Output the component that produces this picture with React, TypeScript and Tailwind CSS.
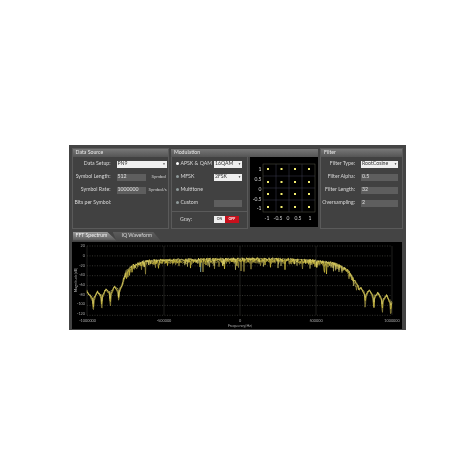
const font = { fontFamily: 'Lato, "Open Sans", "Liberation Sans", sans-serif' };

function rng(seed: number) {
  return () => {
    seed = (seed + 0x6d2b79f5) | 0;
    let t = Math.imul(seed ^ (seed >>> 15), 1 | seed);
    t = (t + Math.imul(t ^ (t >>> 7), 61 | t)) ^ t;
    return ((t ^ (t >>> 14)) >>> 0) / 4294967296;
  };
}

// top edge of the spectrum, in chart pixels (x, y)
const envelope = [
  [15, 52], [50, 41], [52, 34], [54, 28], [61, 22], [73, 18], [90, 17], [130, 16],
  [200, 15.5], [240, 17], [263, 20], [276, 27], [283, 38], [287, 44], [320, 54],
];

function envAt(x: number) {
  for (let i = 0; i < envelope.length - 1; i++) {
    const [x0, y0] = envelope[i];
    const [x1, y1] = envelope[i + 1];
    if (x >= x0 && x <= x1) return y0 + ((y1 - y0) * (x - x0)) / (x1 - x0);
  }
  return 54;
}

function spectrum(seed: number, spread: number, depth: number) {
  const r = rng(seed);
  let d = "";
  for (let x = 15; x <= 320; x += 0.5) {
    const e = envAt(x);
    const side = x < 51 || x > 287;
    let y = e + r() * spread;
    if (side) {
      const phase = ((x - 17) % 8.5) / 8.5;
      y = e + (1 - Math.abs(phase - 0.5) * 2) * depth + r() * 2;
      if (phase > 0.44 && phase < 0.56) y += depth * 0.6 + r() * 4;
    } else if (r() > 0.94) {
      y += 2 + r() * 8;
    }
    d += `${d ? "L" : "M"}${x} ${y.toFixed(1)}`;
  }
  return d;
}

function Chart() {
  const ticks = ["20", "0", "-20", "-40", "-60", "-80", "-100", "-120"];
  const xTicks = [
    ["-1000000", 15],
    ["-500000", 92],
    ["0", 168],
    ["500000", 244],
    ["1000000", 320],
  ] as const;
  return (
    <svg viewBox="0 0 330 87" className="block h-[87px] w-[330px] bg-black">
      {ticks.map((t, i) => (
        <g key={t}>
          <line x1="15" x2="320" y1={4 + i * 9.9} y2={4 + i * 9.9} stroke="#66665f" strokeWidth="0.5" strokeDasharray="1 1.5" />
          <text x="13" y={5.2 + i * 9.7} textAnchor="end" fontSize="3.8" fill="#a8a8a8">{t}</text>
        </g>
      ))}
      {xTicks.map(([t, x]) => (
        <g key={t}>
          <line x1={x} x2={x} y1="4" y2="73" stroke="#3f3f3b" strokeWidth="0.5" />
          <text x={x} y="79.5" textAnchor={x === 15 ? "end" : "middle"} dx={x === 15 ? 9 : 0} fontSize="3.8" fill="#a8a8a8">{t}</text>
        </g>
      ))}
      <text x="168" y="84.5" textAnchor="middle" fontSize="3.8" fill="#a8a8a8">Frequency[Hz]</text>
      <text transform="translate(5 38) rotate(-90)" textAnchor="middle" fontSize="3.8" fill="#a8a8a8">Magnitude[dB]</text>
      <path d="M128 17L128.6 30L129.2 18" fill="none" stroke="#6f8f90" strokeWidth="0.8" />
      <path d={spectrum(7, 6, 9)} fill="none" stroke="#8a7f3a" strokeWidth="0.9" />
      <path d={spectrum(19, 4.5, 7)} fill="none" stroke="#c9b93f" strokeWidth="0.8" />
      <path d={spectrum(31, 2.5, 5)} fill="none" stroke="#e6dc7a" strokeWidth="0.5" />
    </svg>
  );
}

function Constellation() {
  const xs = [18, 31.5, 45, 59];
  const ys = [12, 25, 37, 50];
  return (
    <svg viewBox="0 0 68 70" className="block h-[70px] w-[68px] bg-black">
      <rect x="13" y="7" width="52" height="48" fill="none" stroke="#5a5a4a" strokeWidth="0.5" />
      {[26, 39, 52].map((x) => (
        <line key={x} x1={x} x2={x} y1="7" y2="55" stroke="#3d3d52" strokeWidth="0.5" />
      ))}
      {[19, 31, 43].map((y) => (
        <line key={y} x1="13" x2="65" y1={y} y2={y} stroke="#3d3d52" strokeWidth="0.5" />
      ))}
      {xs.map((x) => ys.map((y) => <rect key={`${x}-${y}`} x={x - 1} y={y - 1} width="2" height="2" fill="#f5ef70" />))}
      {[["1", 12], ["0.5", 22], ["0", 32], ["-0.5", 42], ["-1", 51]].map(([t, y]) => (
        <text key={t} x="11.5" y={Number(y) + 1.8} textAnchor="end" fontSize="5" fill="#d5d5d5">{t}</text>
      ))}
      {[["-1", 17], ["-0.5", 28], ["0", 38], ["0.5", 48], ["1", 60]].map(([t, x]) => (
        <text key={t} x={x} y="63" textAnchor="middle" fontSize="5" fill="#d5d5d5">{t}</text>
      ))}
    </svg>
  );
}

function Header({ title }: { title: string }) {
  return (
    <div className="flex h-[8px] items-center bg-gradient-to-b from-[#777777] to-[#555555] px-[3px] text-[5.2px] leading-none text-[#e8e8e8]">
      {title}
    </div>
  );
}

function Label({ children, w }: { children: string; w: string }) {
  return <span className={`${w} shrink-0 text-right text-[5.2px] leading-none whitespace-nowrap text-[#d8d8d8]`}>{children}</span>;
}

function Select({ value, w }: { value: string; w: string }) {
  return (
    <div className={`${w} flex h-[7px] items-center justify-between bg-[#efefef] px-[1px] text-[5.2px] leading-none text-[#333333]`}>
      <span className="whitespace-nowrap">{value}</span>
      <span className="text-[3px]">▼</span>
    </div>
  );
}

function Field({ value, w }: { value?: string; w: string }) {
  return (
    <div className={`${w} flex h-[7px] items-center bg-[#5e5e5e] px-[1px] text-[5.2px] leading-none text-[#e0e0e0]`}>
      {value}
    </div>
  );
}

function Radio({ label, on }: { label: string; on?: boolean }) {
  return (
    <div className="flex w-[38px] items-center gap-[1.5px] text-[5.2px] leading-none whitespace-nowrap text-[#d8d8d8]">
      <span className={`h-[3px] w-[3px] shrink-0 rounded-full ${on ? "bg-white" : "bg-[#8f9a9a]"}`} />
      {label}
    </div>
  );
}

export default function App() {
  return (
    <div className="flex h-[474px] w-[474px] items-center justify-center bg-white" style={font}>
      <div className="flex h-[185px] w-[337px] flex-col bg-[#444444] px-[3px] pt-[3px] blur-[0.4px]">
        <div className="flex h-[81px] gap-[2px]">
          <section className="w-[98px] border border-[#5a5a5a] bg-[#414141]">
            <Header title="Data Source" />
            <div className="flex flex-col gap-[6px] pt-[4px]">
              <div className="flex items-center gap-[6px]">
                <Label w="w-[38px]">Data Setup:</Label>
                <Select value="PN9" w="w-[50px]" />
              </div>
              <div className="flex items-center gap-[6px]">
                <Label w="w-[38px]">Symbol Length:</Label>
                <Field value="512" w="w-[29px]" />
                <span className="text-[4.5px] leading-none text-[#d0d0d0]">Symbol</span>
              </div>
              <div className="flex items-center gap-[6px]">
                <Label w="w-[38px]">Symbol Rate:</Label>
                <Field value="1000000" w="w-[29px]" />
                <span className="-ml-[3px] text-[4.5px] leading-none text-[#d0d0d0]">Symbol/s</span>
              </div>
              <div className="flex h-[7px] items-center pl-[2px] text-[5.2px] leading-none text-[#d8d8d8]">Bits per Symbol:</div>
            </div>
          </section>
          <div className="flex w-[148px] flex-col pt-[1px]">
            <div className="w-full">
              <Header title="Modulation" />
            </div>
            <div className="flex flex-1 gap-[2px]">
              <section className="flex w-[77px] flex-col border border-t-0 border-[#5a5a5a] bg-[#414141]">
                <div className="flex flex-col gap-[6px] pt-[4px] pl-[4px]">
                  <div className="flex items-center">
                    <Radio label="APSK & QAM" on />
                    <Select value="16QAM" w="w-[28px]" />
                  </div>
                  <div className="flex items-center">
                    <Radio label="MFSK" />
                    <Select value="2FSK" w="w-[28px]" />
                  </div>
                  <div className="flex h-[7px] items-center">
                    <Radio label="Multitone" />
                  </div>
                  <div className="flex items-center">
                    <Radio label="Custom" />
                    <Field w="w-[28px]" />
                  </div>
                </div>
                <div className="mt-[4px] flex flex-1 items-center border-t border-[#5a5a5a] pl-[8px]">
                  <span className="w-[34px] text-[5.2px] leading-none text-[#d8d8d8]">Gray:</span>
                  <div className="flex h-[7px] text-[3.5px] leading-none font-bold">
                    <span className="flex w-[11px] items-center justify-center bg-[#eeeeee] text-[#555555]">ON</span>
                    <span className="flex w-[14px] items-center justify-center bg-[#c8101c] text-white">OFF</span>
                  </div>
                </div>
              </section>
              <Constellation />
            </div>
          </div>
          <section className="w-[83px] border border-[#5a5a5a] bg-[#414141]">
            <Header title="Filter" />
            <div className="flex flex-col gap-[6px] pt-[4px]">
              <div className="flex items-center gap-[6px]">
                <Label w="w-[34px]">Filter Type:</Label>
                <Select value="RootCosine" w="w-[37px]" />
              </div>
              <div className="flex items-center gap-[6px]">
                <Label w="w-[34px]">Filter Alpha:</Label>
                <Field value="0.5" w="w-[37px]" />
              </div>
              <div className="flex items-center gap-[6px]">
                <Label w="w-[34px]">Filter Length:</Label>
                <Field value="32" w="w-[37px]" />
              </div>
              <div className="flex items-center gap-[6px]">
                <Label w="w-[34px]">Oversampling:</Label>
                <Field value="2" w="w-[37px]" />
              </div>
            </div>
          </section>
        </div>
        <div className="mt-[3px] flex h-[9px] items-end pl-[1px]">
          <div className="flex h-[9px] w-[44px] items-center bg-gradient-to-b from-[#9a9a9a] to-[#555555] pl-[3px] text-[5.2px] leading-none text-[#f0f0f0] [clip-path:polygon(0_0,78%_0,100%_100%,0_100%)]">
            FFT Spectrum
          </div>
          <div className="-ml-[4px] flex h-[9px] w-[48px] items-center bg-gradient-to-b from-[#5c5c5c] to-[#4a4a4a] pl-[9px] text-[5.2px] leading-none text-[#d8d8d8] [clip-path:polygon(0_0,84%_0,100%_100%,8%_100%)]">
            IQ Waveform
          </div>
        </div>
        <div className="mt-[1px] flex justify-center">
          <Chart />
        </div>
      </div>
    </div>
  );
}
